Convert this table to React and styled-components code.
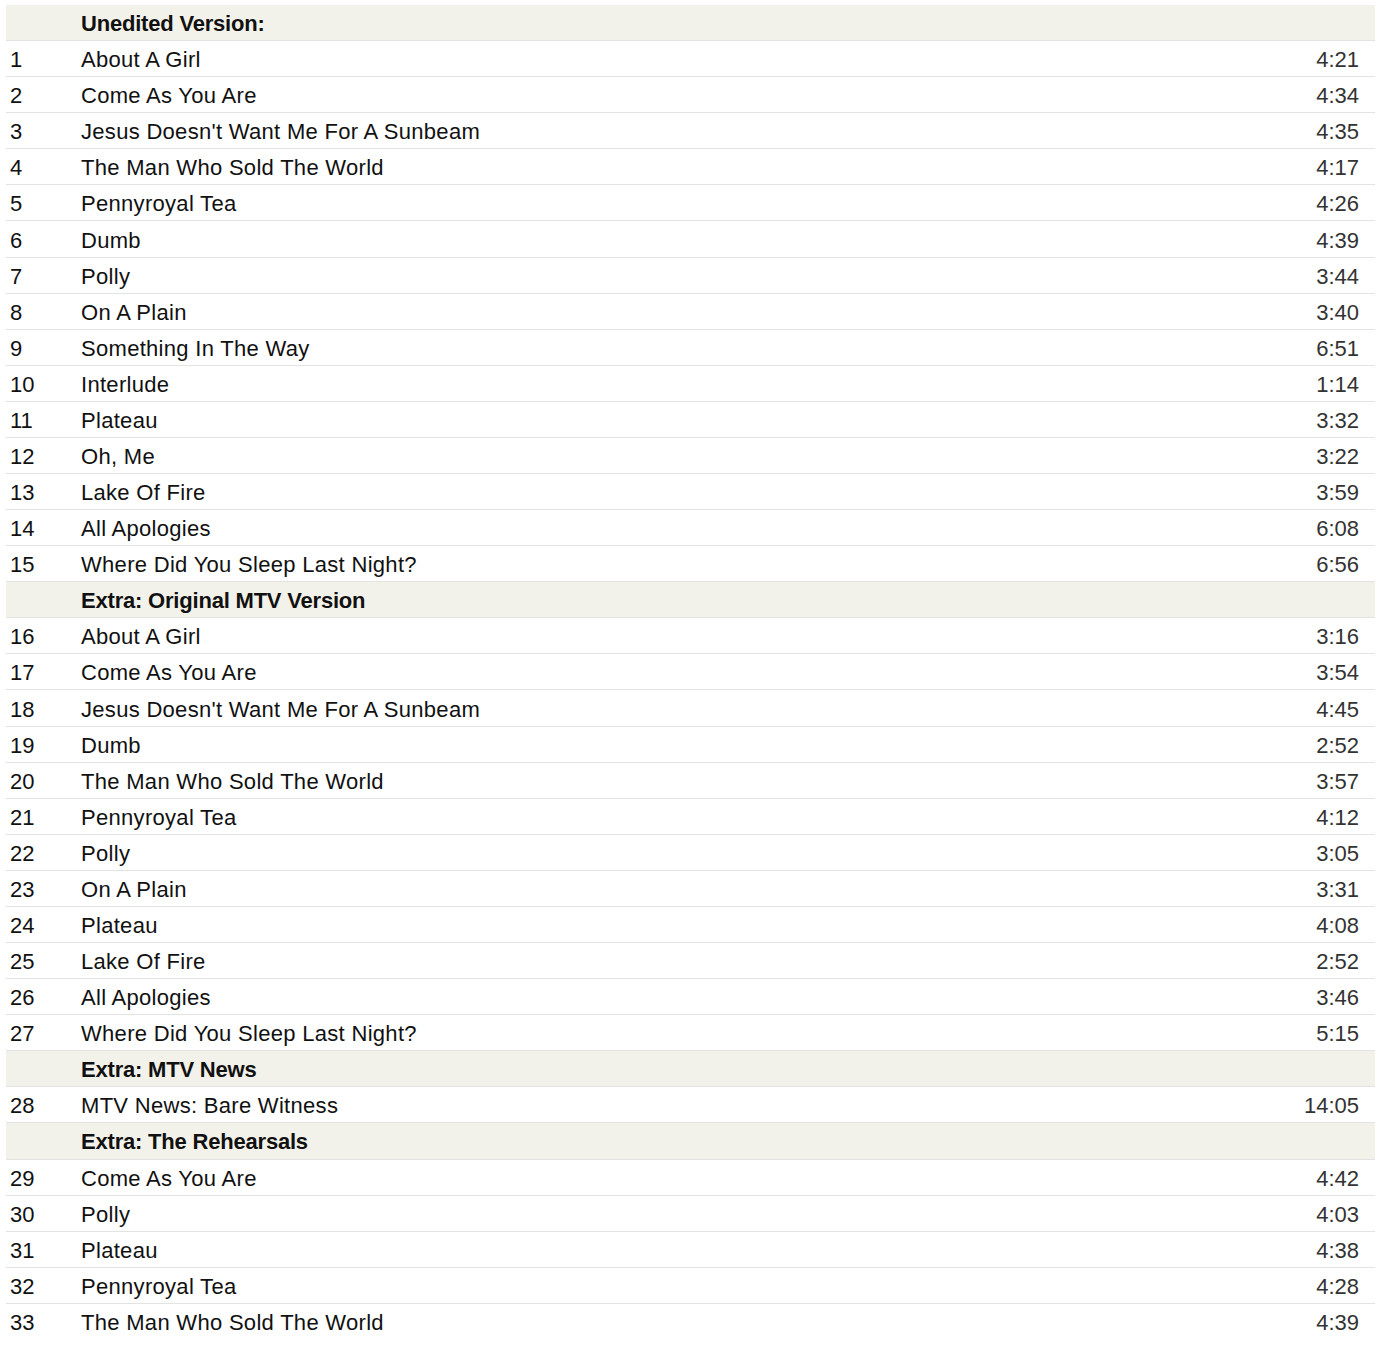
import React from 'react';
import styled, {createGlobalStyle} from 'styled-components';

const GlobalStyle = createGlobalStyle`
body {
  margin: 0;
  background: #fff;
  font-family: "Liberation Sans", Arial, Helvetica, sans-serif;
}
`;

const Page = styled.div`
  padding: 5px 16px 12px 6px;
`;

const Table = styled.div`
  display: flex;
  flex-direction: column;
  width: 1369px;
`;

const Row = styled.div`
  display: grid;
  grid-template-columns: 75px 1fr auto;
  align-items: center;
  height: 36.08px;
  box-sizing: border-box;
  padding-top: 2px;
  border-bottom: 1px solid #e3e3e1;
  background: ${p => (p.$section ? '#f3f2ea' : '#fff')};
  font-size: 22px;
  line-height: 33px;
  color: #111;

  &:last-child {
    border-bottom: none;
  }
`;

const Num = styled.div`
  padding-left: 4px;
`;

const Title = styled.div`
  font-weight: ${p => (p.$bold ? 700 : 400)};
  letter-spacing: ${p => (p.$bold ? '-0.2px' : '0.3px')};
  white-space: nowrap;
`;

const Length = styled.div`
  padding-right: 16px;
  color: #333;
  text-align: right;
`;

const sections = [
  {
    name: 'Unedited Version:',
    tracks: [
      ['About A Girl', '4:21'],
      ['Come As You Are', '4:34'],
      ["Jesus Doesn't Want Me For A Sunbeam", '4:35'],
      ['The Man Who Sold The World', '4:17'],
      ['Pennyroyal Tea', '4:26'],
      ['Dumb', '4:39'],
      ['Polly', '3:44'],
      ['On A Plain', '3:40'],
      ['Something In The Way', '6:51'],
      ['Interlude', '1:14'],
      ['Plateau', '3:32'],
      ['Oh, Me', '3:22'],
      ['Lake Of Fire', '3:59'],
      ['All Apologies', '6:08'],
      ['Where Did You Sleep Last Night?', '6:56'],
    ],
  },
  {
    name: 'Extra: Original MTV Version',
    tracks: [
      ['About A Girl', '3:16'],
      ['Come As You Are', '3:54'],
      ["Jesus Doesn't Want Me For A Sunbeam", '4:45'],
      ['Dumb', '2:52'],
      ['The Man Who Sold The World', '3:57'],
      ['Pennyroyal Tea', '4:12'],
      ['Polly', '3:05'],
      ['On A Plain', '3:31'],
      ['Plateau', '4:08'],
      ['Lake Of Fire', '2:52'],
      ['All Apologies', '3:46'],
      ['Where Did You Sleep Last Night?', '5:15'],
    ],
  },
  {
    name: 'Extra: MTV News',
    tracks: [['MTV News: Bare Witness', '14:05']],
  },
  {
    name: 'Extra: The Rehearsals',
    tracks: [
      ['Come As You Are', '4:42'],
      ['Polly', '4:03'],
      ['Plateau', '4:38'],
      ['Pennyroyal Tea', '4:28'],
      ['The Man Who Sold The World', '4:39'],
    ],
  },
];

export default function App() {
  let n = 0;
  return (
    <Page>
      <GlobalStyle />
      <Table>
        {sections.map(s => (
          <React.Fragment key={s.name}>
            <Row $section>
              <Num />
              <Title $bold>{s.name}</Title>
              <Length />
            </Row>
            {s.tracks.map(([title, len]) => {
              n += 1;
              return (
                <Row key={n}>
                  <Num>{n}</Num>
                  <Title>{title}</Title>
                  <Length>{len}</Length>
                </Row>
              );
            })}
          </React.Fragment>
        ))}
      </Table>
    </Page>
  );
}
